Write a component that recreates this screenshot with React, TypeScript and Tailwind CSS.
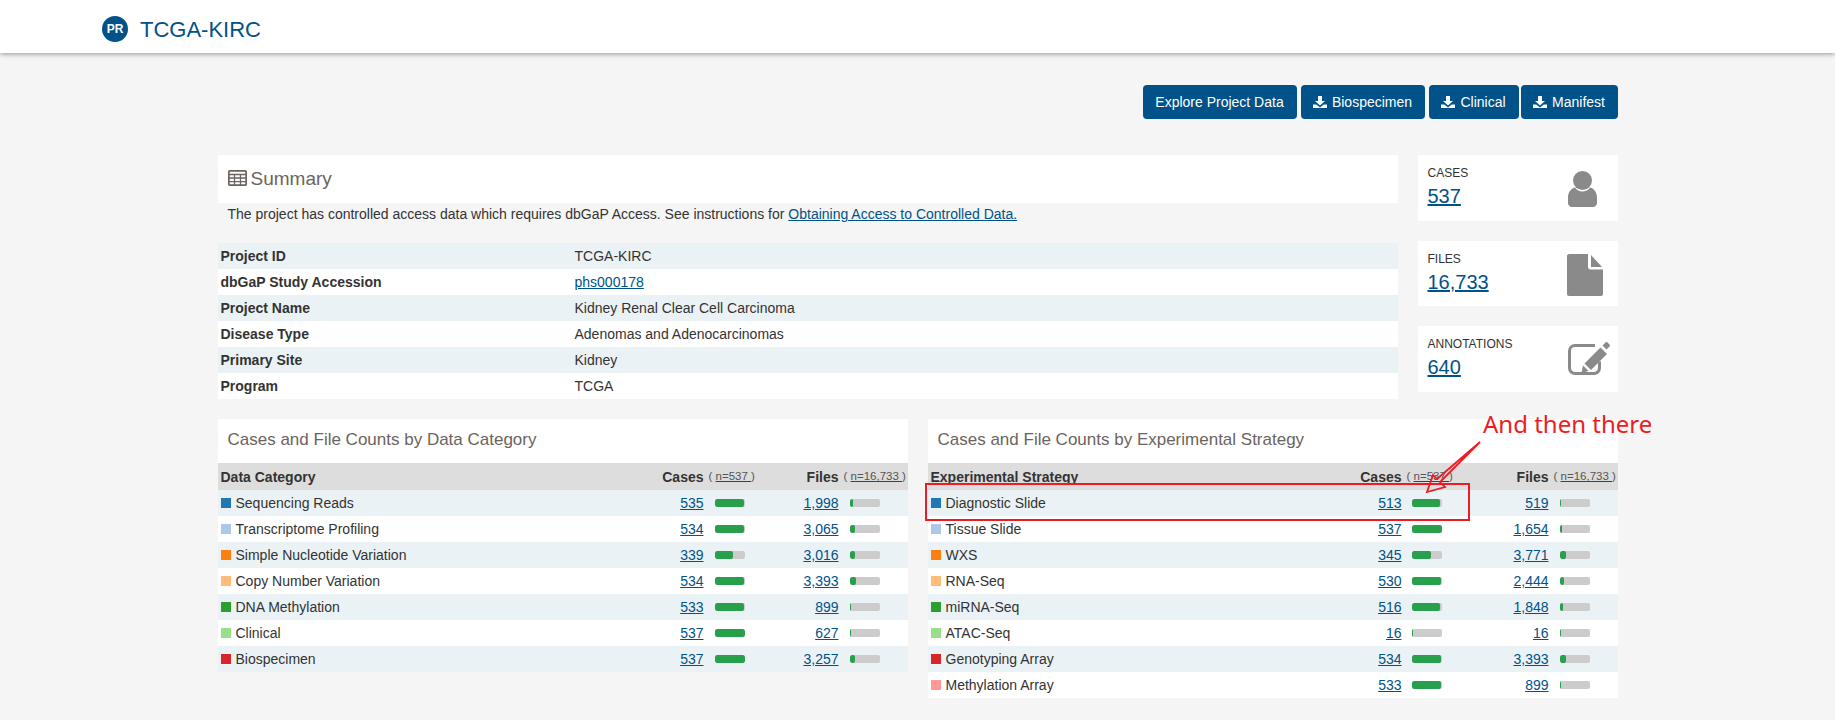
import React from 'react';

const cell = 'h-[26px]';

const summaryRows = [
  ['Project ID', 'TCGA-KIRC'],
  ['dbGaP Study Accession', 'phs000178'],
  ['Project Name', 'Kidney Renal Clear Cell Carcinoma'],
  ['Disease Type', 'Adenomas and Adenocarcinomas'],
  ['Primary Site', 'Kidney'],
  ['Program', 'TCGA'],
];

const categoryRows = [
  ['Sequencing Reads', '#1f77b4', 535, 1998],
  ['Transcriptome Profiling', '#aec7e8', 534, 3065],
  ['Simple Nucleotide Variation', '#ff7f0e', 339, 3016],
  ['Copy Number Variation', '#ffbb78', 534, 3393],
  ['DNA Methylation', '#2ca02c', 533, 899],
  ['Clinical', '#98df8a', 537, 627],
  ['Biospecimen', '#d62728', 537, 3257],
] as [string, string, number, number][];

const strategyRows = [
  ['Diagnostic Slide', '#1f77b4', 513, 519],
  ['Tissue Slide', '#aec7e8', 537, 1654],
  ['WXS', '#ff7f0e', 345, 3771],
  ['RNA-Seq', '#ffbb78', 530, 2444],
  ['miRNA-Seq', '#2ca02c', 516, 1848],
  ['ATAC-Seq', '#98df8a', 16, 16],
  ['Genotyping Array', '#d62728', 534, 3393],
  ['Methylation Array', '#ff9896', 533, 899],
] as [string, string, number, number][];

const DownloadIcon = () => (
  <svg viewBox="0 0 14 14" className="w-[14px] h-[14px] fill-white">
    <path d="M5 1h4v5h3L7 10.5 2 6h3z" />
    <path d="M0 9.5h3.2L7 12.5l3.8-3H14V13H0z" />
  </svg>
);

const Bar = ({ value, total }: { value: number; total: number }) => (
  <div className="w-[30px] h-[8px] bg-[#cccccc] rounded-[2px] overflow-hidden">
    <div className="h-full bg-[#28a04b] rounded-[2px]" style={{ width: `${Math.max((value / total) * 100, 6)}%` }} />
  </div>
);

type CountTableProps = {
  title: string;
  first: string;
  rows: [string, string, number, number][];
  wide?: boolean;
};

// the strategy table gets a wider files column, the browser table did that by itself
const CountTable = ({ title, first, rows, wide }: CountTableProps) => (
  <div className="w-[690px]">
    <div className="h-[44px] bg-white pl-[10px] pb-[2px] flex items-center text-[17px] text-[#6b6460]">{title}</div>
    <div className="h-[27px] bg-[#dddddd] flex items-center pl-[3px] pt-[1px] text-[14px] font-bold text-[#333333]">
      <div className="flex-1">{first}</div>
      <div className="text-right">Cases</div>
      <div className="w-[55px] pl-[5px] text-[11.5px] font-normal text-[#555555] whitespace-nowrap">
        ( <span className="underline decoration-[#005288]">n=537 </span>)
      </div>
      <div className={`text-right ${wide ? 'w-[92px]' : 'w-[80px]'}`}>Files</div>
      <div className="w-[69px] pl-[5px] text-[11.5px] font-normal text-[#555555] whitespace-nowrap">
        ( <span className="underline decoration-[#005288]">n=16,733 </span>)
      </div>
    </div>
    {rows.map(([label, color, cases, files], i) => (
      <div key={label} className={`${cell} flex items-center pl-[3px] text-[14px] text-[#333333] ${i % 2 === 0 ? 'bg-[#ebf2f5]' : 'bg-white'}`}>
        <span className="w-[10px] h-[10px] mr-[5px]" style={{ backgroundColor: color }} />
        <span className="flex-1">{label}</span>
        <a className="text-right text-[#005288] underline">{cases.toLocaleString('en-US')}</a>
        <div className={`w-[41px] ${wide ? 'pl-[10px]' : 'pl-[11px]'}`}><Bar value={cases} total={537} /></div>
        <a className={`text-right text-[#005288] underline ${wide ? 'w-[106px]' : 'w-[94px]'}`}>{files.toLocaleString('en-US')}</a>
        <div className="w-[69px] pl-[11px]"><Bar value={files} total={16733} /></div>
      </div>
    ))}
  </div>
);

const StatCard = ({ label, value, icon, className }: { label: string; value: string; icon: React.ReactNode; className: string }) => (
  <div className={`bg-white px-[10px] pt-[10px] flex justify-between ${className}`}>
    <div>
      <div className="text-[12px] text-[#333333] leading-[16px] mb-[1px]">{label}</div>
      <a className="block text-[20px] leading-[28px] text-[#005288] underline">{value}</a>
    </div>
    {icon}
  </div>
);

export default function App() {
  return (
    <div className="relative min-h-[720px] bg-[#f5f5f5] font-['Liberation_Sans',Arial,sans-serif] overflow-hidden">
      <header className="h-[53px] bg-white shadow-[0_1px_5px_rgba(0,0,0,0.4)] pl-[102px] pt-[5px] flex items-center">
        <div className="w-[26px] h-[26px] rounded-full bg-[#005288] text-white text-[12px] font-bold flex items-center justify-center">PR</div>
        <h1 className="ml-[12px] text-[22px] text-[#005288]">TCGA-KIRC</h1>
      </header>

      <main className="w-[1400px] mx-auto pt-[32px]">
        <div className="flex justify-end gap-[3px] h-[34px] text-[14px] text-white">
          <button className="w-[154px] mr-[1px] bg-[#005288] rounded-[4px]">Explore Project Data</button>
          <button className="w-[124px] mr-[1px] bg-[#005288] rounded-[4px] flex items-center justify-center gap-[5px]"><DownloadIcon />Biospecimen</button>
          <button className="w-[90px] bg-[#005288] rounded-[4px] flex items-center justify-center gap-[5px] -mr-[1px]"><DownloadIcon />Clinical</button>
          <button className="w-[97px] bg-[#005288] rounded-[4px] flex items-center justify-center gap-[5px]"><DownloadIcon />Manifest</button>
        </div>

        <div className="flex justify-between mt-[36px]">
          <div className="w-[1180px]">
            <div className="h-[48px] bg-white pl-[10px] flex items-center gap-[4px] text-[19px] text-[#6b6460]">
              <svg viewBox="0 0 19 16" className="w-[19px] h-[16px] -mt-[2px] fill-none stroke-[#6b6460]" strokeWidth="1.7">
                <rect x="0.85" y="0.85" width="17.3" height="14.3" rx="1" />
                <path d="M1 4.500h17M1 8h17M1 11.700h17M6.500 4v11.500M12.500 4v11.500" strokeWidth="1.3" />
              </svg>
              Summary
            </div>
            <p className="h-[40px] pl-[10px] pt-[1px] text-[14px] text-[#333333]">
              The project has controlled access data which requires dbGaP Access. See instructions for <a className="text-[#005288] underline">Obtaining Access to Controlled Data.</a>
            </p>
            {summaryRows.map(([k, v], i) => (
              <div key={k} className={`${cell} flex items-center pl-[3px] text-[14px] text-[#333333] ${i % 2 === 0 ? 'bg-[#ebf2f5]' : 'bg-white'}`}>
                <div className="w-[354px] font-bold">{k}</div>
                {k === 'dbGaP Study Accession' ? <a className="text-[#005288] underline">{v}</a> : <div>{v}</div>}
              </div>
            ))}
          </div>

          <div className="w-[200px]">
            <StatCard label="CASES" value="537" className="h-[66px]" icon={
              <svg viewBox="0 0 29 36" className="w-[29px] h-[36px] mr-[11px] mt-[6px] fill-[#8a8a8a]">
                <circle cx="14.500" cy="9.500" r="9.500" />
                <path d="M7 16.500c1.500 2.500 4.500 4 7.500 4s6-1.500 7.500-4c4.500 1 7 5.500 7 10v5.500c0 2.200-1.800 4-4 4H4c-2.200 0-4-1.800-4-4v-5.500c0-4.500 2.500-9 7-10z" />
              </svg>
            } />
            <StatCard label="FILES" value="16,733" className="h-[65px] mt-[20px]" icon={
              <svg viewBox="0 0 36 42" className="w-[36px] h-[42px] mr-[5px] mt-[3px] fill-[#8a8a8a]">
                <path d="M2 0h19v13c0 1.500 1 2.500 2.500 2.500H36V40c0 1-1 2-2 2H2c-1 0-2-1-2-2V2C0 1 1 0 2 0z" />
                <path d="M24 1l11 12H24z" />
              </svg>
            } />
            <StatCard label="ANNOTATIONS" value="640" className="h-[66px] mt-[20px]" icon={
              <svg viewBox="0 0 42 33" className="w-[42px] h-[33px] -mr-[2px] mt-[6px] fill-[#8a8a8a]">
                <path d="M27 3.500H7a5.500 5.500 0 0 0-5.500 5.500v17A5.500 5.500 0 0 0 7 31.500h19a5.500 5.500 0 0 0 5.500-5.500v-6.500" fill="none" stroke="#8a8a8a" strokeWidth="3" />
                <path d="M32.500 5.500l6.500 6.500-16 16-6.500-6.500z" />
                <path d="M34.500 3.500l3-3c.6-.6 1.400-.6 2 0l2 2c.6.6.6 1.400 0 2l-3 3z" />
                <path d="M15 23.500l5.500 5.500-7 2z" />
              </svg>
            } />
          </div>
        </div>

        <div className="flex justify-between mt-[20px]">
          <CountTable title="Cases and File Counts by Data Category" first="Data Category" rows={categoryRows} />
          <CountTable title="Cases and File Counts by Experimental Strategy" first="Experimental Strategy" rows={strategyRows} wide />
        </div>
      </main>

      {/* red markup drawn over the screenshot */}
      <div className="absolute left-[925px] top-[483px] w-[545px] h-[38px] border-2 border-[#ed1c24]" />
      <svg viewBox="0 0 60 55" className="absolute left-[1424px] top-[440px] w-[60px] h-[55px] fill-none stroke-[#ed1c24]" strokeWidth="1.8">
        <path d="M56 2L13 39 9 35 3 52 21 47 16 42z" />
      </svg>
      <div className="absolute left-[1483px] top-[407px] text-[24px] leading-[34px] text-[#ed1c24] whitespace-nowrap font-['Noto_Sans',sans-serif]">And then there</div>
    </div>
  );
}
